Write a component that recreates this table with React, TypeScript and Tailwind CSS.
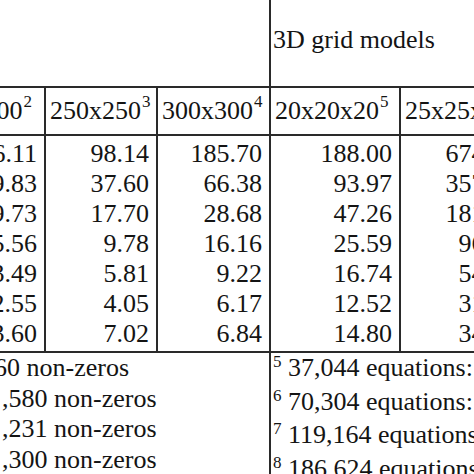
import React from "react";

const cols = ["w-[106px]", "w-[112px]", "w-[113px]", "w-[130px]", "w-[125px]"];

const headers: [string, string][] = [
  ["200x200", "2"],
  ["250x250", "3"],
  ["300x300", "4"],
  ["20x20x20", "5"],
  ["25x25x25", "6"],
];

const rows: string[][] = [
  ["56.11", "98.14", "185.70", "188.00", "674.21"],
  ["19.83", "37.60", "66.38", "93.97", "357.19"],
  ["9.73", "17.70", "28.68", "47.26", "181.05"],
  ["5.56", "9.78", "16.16", "25.59", "96.42"],
  ["3.49", "5.81", "9.22", "16.74", "54.37"],
  ["2.55", "4.05", "6.17", "12.52", "31.80"],
  ["3.60", "7.02", "6.84", "14.80", "34.66"],
];

const leftNotes = [
  { text: "60 non-zeros", cls: "ml-[-6px]" },
  { text: ",580 non-zeros", cls: "ml-[2px]" },
  { text: ",231 non-zeros", cls: "ml-[2px]" },
  { text: ",300 non-zeros", cls: "ml-[2px]" },
];

const rightNotes: [string, string][] = [
  ["5", "37,044 equations: 238,632 non-zeros"],
  ["6", "70,304 equations: 458,432 non-zeros"],
  ["7", "119,164 equations: 786,032 non-zeros"],
  ["8", "186,624 equations: 1,240,704 non-zeros"],
];

function Sup({ n }: { n: string }) {
  return <span className="relative top-[-9px] ml-[1px] text-[17px]">{n}</span>;
}

export default function App() {
  return (
    <div className="h-[474px] w-[474px] overflow-hidden bg-white text-[#141414]">
      <div
        className="ml-[-62px] w-[592px] text-[26px] leading-[30px]"
        style={{ fontFamily: '"Liberation Serif", "Times New Roman", serif' }}
      >
        {/* group header */}
        <div className="flex h-[86px] whitespace-nowrap">
          <div className="w-[331px]" />
          <div className="flex flex-1 items-center border-l-2 border-[#2a2a2a] pb-[7px] pl-[2px]">
            3D grid models
          </div>
        </div>

        {/* size header */}
        <div className="flex h-[50px] whitespace-nowrap border-y-2 border-[#2a2a2a]">
          {headers.map(([label, note], i) => (
            <div
              key={label}
              className={`${cols[i]} flex shrink-0 items-center ${
                i === 0 ? "justify-end pr-[12px]" : "border-l-2 border-[#2a2a2a] pl-[4px]"
              }`}
            >
              {label}
              <Sup n={note} />
            </div>
          ))}
        </div>

        {/* timings */}
        <div className="flex whitespace-nowrap border-b-2 border-[#2a2a2a]">
          {headers.map((_, i) => (
            <div
              key={i}
              className={`${cols[i]} shrink-0 pb-[2px] pt-[3px] pr-[7px] text-right ${i > 0 ? "border-l-2 border-[#2a2a2a]" : ""}`}
            >
              {rows.map((r, j) => (
                <div key={j}>{r[i]}</div>
              ))}
            </div>
          ))}
        </div>

        {/* footnotes */}
        <div className="flex h-[130px] whitespace-nowrap leading-[30.5px]">
          <div className="w-[331px] shrink-0 overflow-hidden pl-[62px]">
            {leftNotes.map((n) => (
              <div key={n.text} className={n.cls}>
                {n.text}
              </div>
            ))}
          </div>
          <div className="flex-1 border-l-2 border-[#2a2a2a] pl-[2px]">
            {rightNotes.map(([n, text]) => (
              <div key={n}>
                <span className="relative top-[-9px] text-[17px]">{n}</span> {text}
              </div>
            ))}
          </div>
        </div>
      </div>
    </div>
  );
}
